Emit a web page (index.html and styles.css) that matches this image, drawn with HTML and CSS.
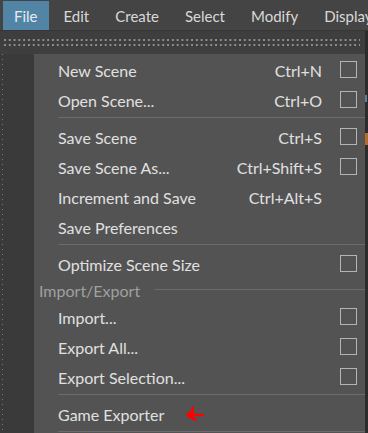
FILE: index.html
```html
<!DOCTYPE html>
<html>
<head>
<meta charset="utf-8">
<link rel="stylesheet" href="styles.css">
</head>
<body>
<div class="menubar">
  <div class="mb-item active">File</div>
  <div class="mb-item">Edit</div>
  <div class="mb-item">Create</div>
  <div class="mb-item">Select</div>
  <div class="mb-item">Modify</div>
  <div class="mb-item">Display</div>
</div>
<div class="workspace">
  <div class="viewport">
    <div class="strip">
      <div class="dots"></div>
      <div class="dots"></div>
    </div>
    <div class="panel"></div>
  </div>
  <div class="edge">
    <span class="bit blue"></span>
    <span class="bit orange"></span>
  </div>
</div>

<div class="menu">
  <div class="item"><span class="label">New Scene</span><span class="key">Ctrl+N</span><span class="check"></span></div>
  <div class="item"><span class="label">Open Scene...</span><span class="key">Ctrl+O</span><span class="check"></span></div>
  <div class="sep"></div>
  <div class="item"><span class="label">Save Scene</span><span class="key">Ctrl+S</span><span class="check"></span></div>
  <div class="item"><span class="label">Save Scene As...</span><span class="key">Ctrl+Shift+S</span><span class="check"></span></div>
  <div class="item"><span class="label">Increment and Save</span><span class="key">Ctrl+Alt+S</span><span class="nocheck"></span></div>
  <div class="item"><span class="label">Save Preferences</span><span class="key"></span><span class="nocheck"></span></div>
  <div class="sep"></div>
  <div class="item"><span class="label">Optimize Scene Size</span><span class="key"></span><span class="check"></span></div>
  <div class="header"><span class="htext">Import/Export</span><span class="hline"></span></div>
  <div class="item"><span class="label">Import...</span><span class="key"></span><span class="check"></span></div>
  <div class="item"><span class="label">Export All...</span><span class="key"></span><span class="check"></span></div>
  <div class="item"><span class="label">Export Selection...</span><span class="key"></span><span class="check"></span></div>
  <div class="sep"></div>
  <div class="item"><span class="label">Game Exporter</span><span class="key"></span><span class="nocheck"></span></div>
  <div class="sep"></div>
  <svg class="arrow" width="20" height="16" viewBox="0 0 20 16">
    <path d="M2.5 9 L17.5 9 M7.5 1.5 L7.5 11 Q7.5 13.5 10.5 13.5 M2.5 9 L5.5 6.5 M2.5 9 L5.5 11.5" fill="none" stroke="#ff0000" stroke-width="2.6" stroke-linecap="round" stroke-linejoin="round"/>
  </svg>
</div>
</body>
</html>
```

FILE: styles.css
```css
html, body {
  margin: 0;
  padding: 0;
}
body {
  width: 368px;
  height: 433px;
  overflow: hidden;
  background: #3d3d3d;
  font-family: Lato, "Open Sans", sans-serif;
  position: relative;
}
.menubar {
  height: 30px;
  background: #444444;
  display: flex;
  gap: 4px;
  padding-left: 3px;
  padding-top: 1px;
  box-sizing: border-box;
  white-space: nowrap;
  overflow: hidden;
}
.mb-item {
  padding: 0 11px;
  display: flex;
  align-items: center;
  font-size: 15px;
  color: #d9d9d9;
  height: 29px;
}
.mb-item.active {
  background: #5285a5;
  color: #e4ecf2;
}
.workspace {
  display: flex;
  height: 403px;
  border-top: 1px solid #363636;
}
.viewport {
  flex: 1;
  display: flex;
  flex-direction: column;
}
.strip {
  height: 23px;
  padding: 8px 5px 0 3px;
  box-sizing: border-box;
  display: flex;
  flex-direction: column;
  gap: 2.7px;
  background: #3e3e3e;
}
.dots {
  height: 2px;
  background-image: linear-gradient(to right, #8e8e8e 2px, transparent 2px);
  background-size: 4.8px 2px;
  background-position: 1px 0;
}
.panel {
  flex: 1;
  background-color: #3a3a3a;
  background-image: linear-gradient(to bottom, #7a7a7a 1px, transparent 1px);
  background-size: 1px 5px;
  background-repeat: repeat-y;
  background-position: 2px 0;
}
.edge {
  width: 3px;
  background: #2c2c2c;
  position: relative;
}
.bit {
  position: absolute;
  left: 0;
  width: 2px;
}
.bit.blue { top: 64px; height: 7px; background: #5b7fa3; }
.bit.orange { top: 102px; height: 12px; background: #b26d2e; width: 3px; }

.menu {
  position: absolute;
  left: 34px;
  top: 54px;
  width: 331px;
  background: #535353;
  padding-top: 1px;
  color: #e0e0e0;
  font-size: 16px;
}
.item {
  height: 30px;
  display: flex;
  align-items: center;
  padding: 0 8px 0 24px;
  white-space: nowrap;
}
.label {
  flex: 1;
}
.key {
  margin-right: 18px;
}
.check {
  width: 15px;
  height: 15px;
  border: 1px solid #b4b4b4;
  margin-top: -2px;
}
.nocheck {
  width: 17px;
  height: 17px;
}
.sep {
  height: 7px;
  padding-top: 2px;
  box-sizing: border-box;
  margin-left: 24px;
}
.sep::before {
  content: "";
  display: block;
  height: 1px;
  background: #6c6c6c;
}
.header {
  height: 23px;
  display: flex;
  align-items: center;
  padding-left: 5px;
  color: #a0a0a0;
}
.htext {
  margin-top: -1px;
}
.hline {
  flex: 1;
  height: 1px;
  background: #6c6c6c;
  margin-left: 14px;
  margin-top: -3px;
}
.arrow {
  position: absolute;
  left: 151px;
  top: 352px;
}
```
